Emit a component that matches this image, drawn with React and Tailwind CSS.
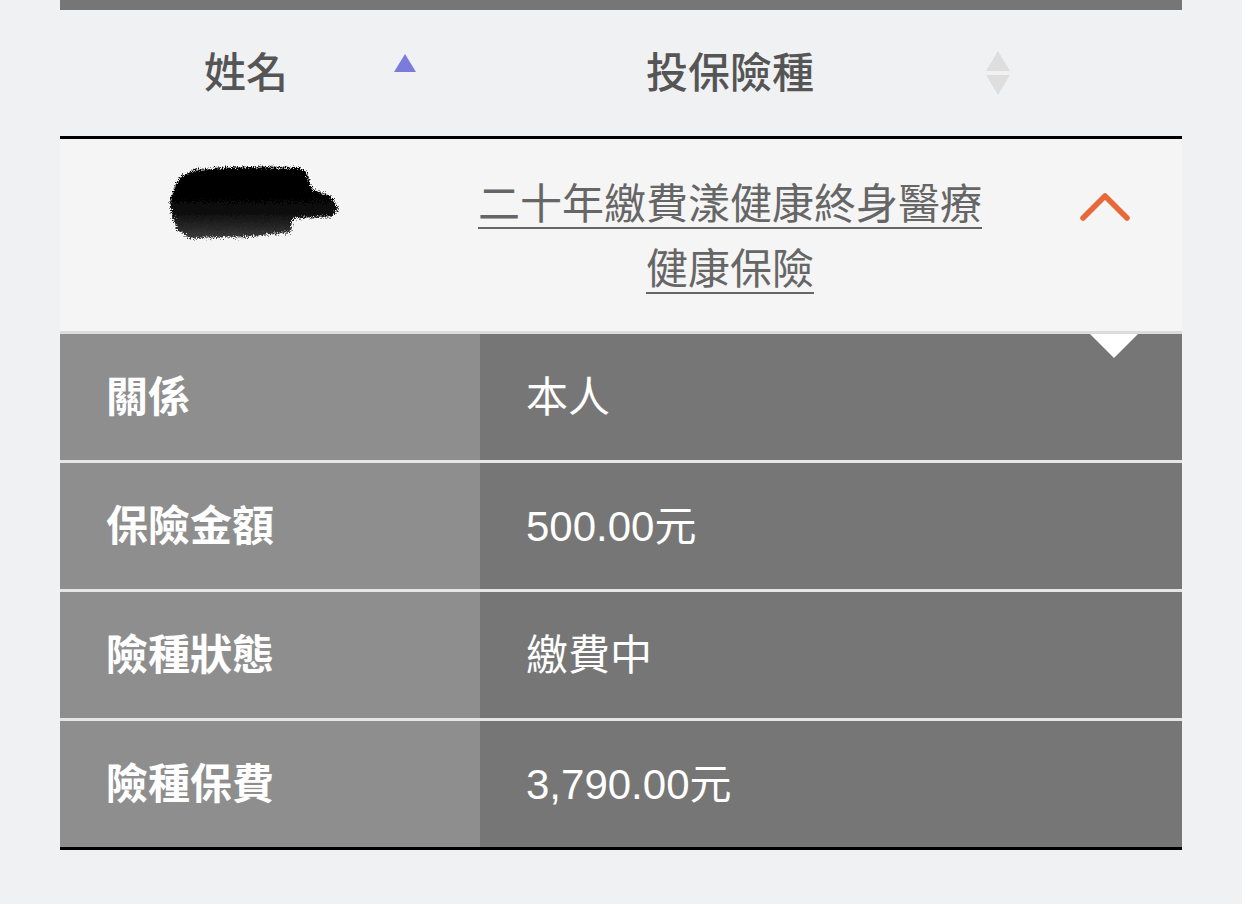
function SortUpActive() {
  return (
    <svg width="24" height="20" viewBox="0 0 24 20">
      <path d="M12 1 L23 19 L1 19 Z" fill="#7b7bdc" />
    </svg>
  );
}

function SortBoth() {
  return (
    <svg width="26" height="46" viewBox="0 0 26 46">
      <path d="M13 1 L25 21 L1 21 Z" fill="#dedede" />
      <path d="M13 45 L25 25 L1 25 Z" fill="#dedede" />
    </svg>
  );
}

function ChevronUp() {
  return (
    <svg width="52" height="32" viewBox="0 0 52 32">
      <path
        d="M4 28 L26 6 L48 28"
        fill="none"
        stroke="#e8683a"
        strokeWidth="5.5"
        strokeLinecap="round"
        strokeLinejoin="round"
      />
    </svg>
  );
}

const blobPath =
  "M22 21 L36 15 L80 12 L140 13 L146 17 L152 35 L170 41 L178 53 L172 61 L132 63 L130 77 L90 81 L30 83 L18 75 L12 60 L10 45 L16 30 Z";

function Redacted() {
  return (
    <svg width="190" height="95" viewBox="0 0 190 95">
      <defs>
        <filter id="rough" x="-10%" y="-20%" width="120%" height="140%">
          <feTurbulence type="fractalNoise" baseFrequency="1.1" numOctaves="2" seed="3" result="n" />
          <feDisplacementMap in="SourceGraphic" in2="n" scale="9" xChannelSelector="R" yChannelSelector="G" />
        </filter>
        <filter id="grain" x="-10%" y="-20%" width="120%" height="140%">
          <feTurbulence type="fractalNoise" baseFrequency="1.6" numOctaves="1" seed="7" result="n" />
          <feDisplacementMap in="SourceGraphic" in2="n" scale="14" xChannelSelector="R" yChannelSelector="G" />
        </filter>
        <linearGradient id="fade" x1="0" y1="0" x2="0" y2="1">
          <stop offset="0" stopColor="#000" />
          <stop offset="0.6" stopColor="#080808" />
          <stop offset="1" stopColor="#3a3a3a" />
        </linearGradient>
      </defs>
      <path d={blobPath} fill="#000" opacity="0.45" filter="url(#grain)" />
      <path d={blobPath} fill="url(#fade)" filter="url(#rough)" />
    </svg>
  );
}

const details = [
  ["關係", "本人"],
  ["保險金額", "500.00元"],
  ["險種狀態", "繳費中"],
  ["險種保費", "3,790.00元"],
];

export default function App() {
  return (
    <div className="min-h-screen bg-[#f0f1f3] px-[60px] font-['Liberation_Sans','Noto_Sans_CJK_TC',sans-serif]">
      <div className="h-[10px] bg-[#767676]" />

      <div className="flex h-[129px] border-b-[3px] border-black text-[42px] font-medium text-[#555]">
        <div className="relative flex w-[372px] items-center justify-center">
          <span>姓名</span>
          <div className="absolute left-[333px] top-[43px]">
            <SortUpActive />
          </div>
        </div>
        <div className="relative flex w-[596px] items-center justify-center">
          <span>投保險種</span>
          <div className="absolute left-[553px] top-[40px]">
            <SortBoth />
          </div>
        </div>
        <div className="flex-1" />
      </div>

      <div className="flex bg-[#f5f5f5] pt-[33px] pb-[29px] border-b-[3px] border-[#dcdcdc]">
        <div className="w-[372px] pl-[100px]">
          <div className="-mt-[17px] h-[95px]">
            <Redacted />
          </div>
        </div>
        <div className="w-[596px] text-center text-[42px] leading-[65px] text-[#666] underline decoration-2 underline-offset-[8px]">
          二十年繳費漾健康終身醫療
          <br />
          健康保險
        </div>
        <div className="flex flex-1 justify-center pt-[18px]">
          <ChevronUp />
        </div>
      </div>

      <div className="relative border-b-[3px] border-black">
        <div className="absolute left-[1030px] top-0 h-0 w-0 border-x-[24px] border-t-[24px] border-x-transparent border-t-white" />
        {details.map(([label, value], i) => (
          <div
            key={label}
            className={`flex text-[42px] text-white ${i > 0 ? "h-[129px] border-t-[3px] border-[#e6e6e6]" : "h-[126px]"}`}
          >
            <div className="flex w-[420px] items-center bg-[#8e8e8e] pl-[46px] font-bold">
              {label}
            </div>
            <div className="flex flex-1 items-center bg-[#767676] pl-[46px]">
              {value}
            </div>
          </div>
        ))}
      </div>
    </div>
  );
}
